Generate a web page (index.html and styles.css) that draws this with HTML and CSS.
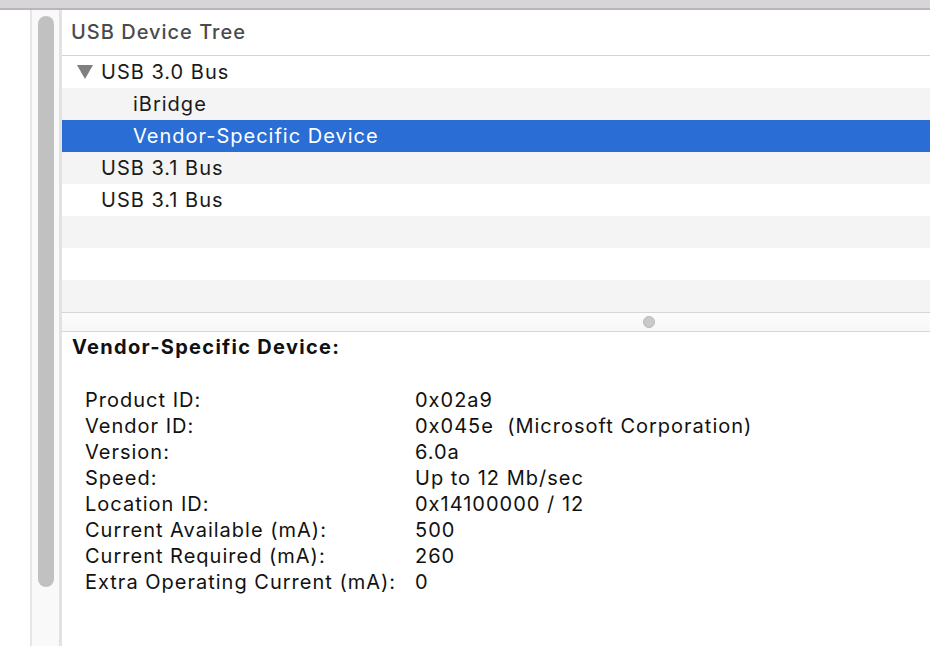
FILE: index.html
```html
<!DOCTYPE html>
<html>
<head>
<meta charset="utf-8">
<link rel="stylesheet" href="styles.css">
</head>
<body>
<div class="topbar"></div>
<div class="main">
  <div class="leftpad"></div>
  <div class="scroller"><div class="thumb"></div></div>
  <div class="panel">
    <div class="header">USB Device Tree</div>
    <div class="rows">
      <div class="row odd"><span class="tri"><svg width="16" height="14" viewBox="0 0 16 14"><polygon points="0,0 16,0 8,14" fill="#7f7f7f"/></svg></span><span class="lvl1">USB 3.0 Bus</span></div>
      <div class="row even"><span class="lvl2">iBridge</span></div>
      <div class="row sel"><span class="lvl2">Vendor-Specific Device</span></div>
      <div class="row even"><span class="lvl1">USB 3.1 Bus</span></div>
      <div class="row odd"><span class="lvl1">USB 3.1 Bus</span></div>
      <div class="row even"></div>
      <div class="row odd"></div>
      <div class="row even"></div>
    </div>
    <div class="splitter"><div class="dot"></div></div>
    <div class="details">
      <div class="dtitle">Vendor-Specific Device:</div>
      <div class="table">
        <div class="k">Product ID:</div><div class="v">0x02a9</div>
        <div class="k">Vendor ID:</div><div class="v">0x045e&nbsp; (Microsoft Corporation)</div>
        <div class="k">Version:</div><div class="v">6.0a</div>
        <div class="k">Speed:</div><div class="v">Up to 12 Mb/sec</div>
        <div class="k">Location ID:</div><div class="v">0x14100000 / 12</div>
        <div class="k">Current Available (mA):</div><div class="v">500</div>
        <div class="k">Current Required (mA):</div><div class="v">260</div>
        <div class="k">Extra Operating Current (mA):</div><div class="v">0</div>
      </div>
    </div>
  </div>
</div>
</body>
</html>
```
FILE: styles.css
```css
html, body {
  margin: 0;
  padding: 0;
}
body {
  width: 930px;
  height: 646px;
  overflow: hidden;
  background: #ffffff;
  font-family: "Inter", "Liberation Sans", sans-serif;
  color: #1a1a1a;
}
.topbar {
  height: 8px;
  background: #d7d5d8;
  border-bottom: 2px solid #b8b6b9;
}
.main {
  display: flex;
  height: 636px;
}
.leftpad {
  width: 30px;
  background: #ffffff;
}
.scroller {
  width: 27px;
  border-left: 2px solid #e6e6e6;
  border-right: 3px solid #e2e2e2;
  background: #f9f9f9;
  padding-top: 6px;
}
.thumb {
  margin-left: 6px;
  width: 16px;
  height: 571px;
  border-radius: 8px;
  background: #c1c1c1;
}
.panel {
  flex: 1;
  display: flex;
  flex-direction: column;
}
.header {
  height: 45px;
  border-bottom: 1px solid #d3d3d3;
  padding-left: 9px;
  padding-bottom: 1px;
  box-sizing: border-box;
  height: 46px;
  display: flex;
  align-items: center;
  font-size: 20px;
  font-weight: 500;
  color: #4b4b4b;
  letter-spacing: 1px;
}
.row {
  height: 32px;
  display: flex;
  align-items: center;
  font-size: 20px;
  letter-spacing: 1px;
  color: #1a1a1a;
}
.odd { background: #ffffff; }
.even { background: #f4f4f4; }
.sel { background: #2a6dd5; color: #ffffff; }
.tri {
  width: 16px;
  height: 14px;
  margin-left: 15px;
  margin-right: 8px;
  margin-top: -1px;
  display: flex;
}
.tri + .lvl1 { padding-left: 0; }
.lvl1 { padding-left: 39px; }
.lvl2 { padding-left: 71px; }
.splitter {
  height: 18px;
  border-top: 1px solid #d6d6d6;
  border-bottom: 1px solid #d6d6d6;
  background: linear-gradient(#fcfcfc, #f7f7f7);
  display: flex;
  align-items: center;
  padding-left: 581px;
}
.dot {
  width: 10px;
  height: 10px;
  border-radius: 50%;
  background: #c9c9c9;
  border: 1px solid #b9b9b9;
}
.details {
  padding: 2px 0 0 10px;
  font-size: 20px;
  letter-spacing: 1px;
  color: #111111;
}
.dtitle {
  font-weight: 700;
  letter-spacing: 1.3px;
  line-height: 26px;
  margin-bottom: 27px;
}
.table {
  display: grid;
  grid-template-columns: 330px auto;
  padding-left: 13px;
  line-height: 26px;
}
```
